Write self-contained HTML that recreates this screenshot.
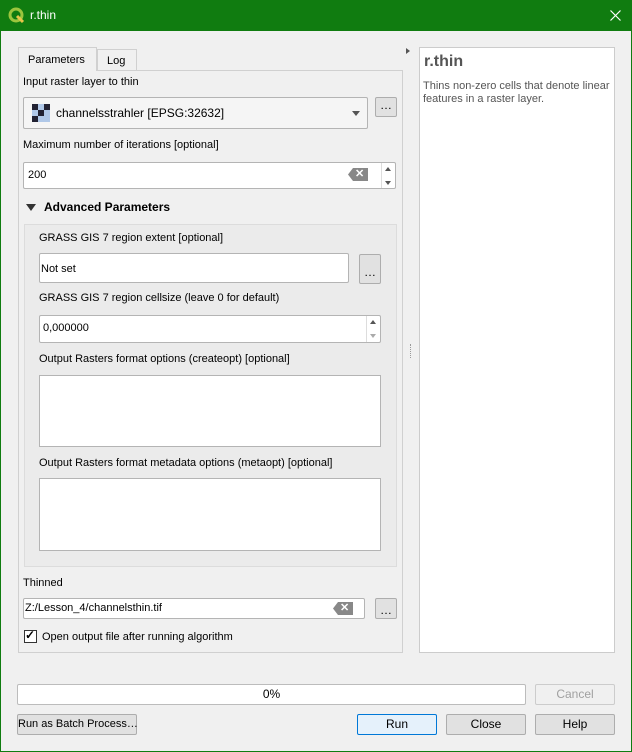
<!DOCTYPE html>
<html><head><style>
*{box-sizing:border-box;margin:0;padding:0}
body{width:632px;height:752px;background:#f0f0f0;font-family:"Liberation Sans",sans-serif;font-size:11px;color:#000;position:relative;overflow:hidden}
.a{position:absolute}
.t{position:absolute;white-space:nowrap;line-height:13px}
.f{position:absolute;background:#fff;border:1px solid #b4b4b4;border-radius:2px}
.b{position:absolute;background:#e1e1e1;border:1px solid #adadad;border-radius:2px;text-align:center;font-size:12px;white-space:nowrap}
.clr{position:absolute;width:20px;height:13px;background:#888;clip-path:polygon(25% 0,100% 0,100% 100%,25% 100%,0 50%)}
.clr:after{content:"✕";position:absolute;left:7px;top:-1px;color:#fff;font-size:11px;font-weight:bold}
</style></head><body>
<div class="a" style="left:0;top:0;width:632px;height:752px;border:1px solid #107c10;border-top:none"></div>
<div class="a" style="left:0;top:0;width:632px;height:31px;background:#107c10"></div>
<svg class="a" style="left:8px;top:7px" width="17" height="17" viewBox="0 0 17 17"><circle cx="8" cy="8" r="6" fill="none" stroke="#9bc53d" stroke-width="3"/><path d="M9 9l6 6" stroke="#e8c54a" stroke-width="3"/></svg>
<div class="t" style="left:30px;top:9px;color:#fff;font-size:12px">r.thin</div>
<svg class="a" style="left:610px;top:10px" width="11" height="11" viewBox="0 0 11 11"><path d="M0.5 0.5L10.5 10.5M10.5 0.5L0.5 10.5" stroke="#fff" stroke-width="1.2"/></svg>

<div class="a" style="left:18px;top:70px;width:385px;height:583px;border:1px solid #d0d0d0;background:#f0f0f0"></div>
<div class="a" style="left:18px;top:47px;width:79px;height:24px;border:1px solid #d0d0d0;border-bottom:none;background:#f0f0f0"></div>
<div class="t" style="left:28px;top:54px">Parameters</div>
<div class="a" style="left:97px;top:49px;width:40px;height:21px;border:1px solid #d0d0d0;border-bottom:none;background:#f0f0f0"></div>
<div class="t" style="left:107px;top:55px">Log</div>

<div class="t" style="left:23px;top:76px">Input raster layer to thin</div>
<div class="f" style="left:23px;top:97px;width:345px;height:32px;background:#f5f5f5"></div>
<div class="a" style="left:32px;top:104px;width:18px;height:18px;background:#b0c8e8"></div>
<div class="a" style="left:32px;top:104px;width:6px;height:6px;background:#223"></div>
<div class="a" style="left:44px;top:104px;width:6px;height:6px;background:#223"></div>
<div class="a" style="left:38px;top:110px;width:6px;height:6px;background:#223"></div>
<div class="a" style="left:32px;top:116px;width:6px;height:6px;background:#223"></div>
<div class="t" style="left:56px;top:107px;font-size:12px">channelsstrahler [EPSG:32632]</div>
<div class="a" style="left:352px;top:111px;border:4px solid transparent;border-top:5px solid #555"></div>
<div class="b" style="left:375px;top:97px;width:22px;height:20px;line-height:14px">…</div>

<div class="t" style="left:23px;top:139px">Maximum number of iterations [optional]</div>
<div class="f" style="left:23px;top:162px;width:373px;height:27px"></div>
<div class="t" style="left:28px;top:169px">200</div>
<div class="clr" style="left:348px;top:168px"></div>
<div class="a" style="left:381px;top:163px;width:1px;height:25px;background:#ddd"></div>
<div class="a" style="left:385px;top:167px;border:3px solid transparent;border-bottom:4px solid #555;border-top:none"></div>
<div class="a" style="left:385px;top:181px;border:3px solid transparent;border-top:4px solid #555;border-bottom:none"></div>

<div class="a" style="left:26px;top:204px;border:5px solid transparent;border-top:7px solid #333;border-bottom:none"></div>
<div class="t" style="left:44px;top:201px;font-weight:bold;font-size:12px">Advanced Parameters</div>

<div class="a" style="left:24px;top:224px;width:373px;height:343px;border:1px solid #dcdcdc;background:#ebebeb"></div>
<div class="t" style="left:39px;top:232px">GRASS GIS 7 region extent [optional]</div>
<div class="f" style="left:39px;top:253px;width:310px;height:30px"></div>
<div class="t" style="left:41px;top:263px">Not set</div>
<div class="b" style="left:359px;top:254px;width:22px;height:30px;line-height:34px">…</div>
<div class="t" style="left:39px;top:292px">GRASS GIS 7 region cellsize (leave 0 for default)</div>
<div class="f" style="left:39px;top:315px;width:342px;height:28px"></div>
<div class="t" style="left:43px;top:322px">0,000000</div>
<div class="a" style="left:366px;top:316px;width:1px;height:26px;background:#ddd"></div>
<div class="a" style="left:370px;top:320px;border:3px solid transparent;border-bottom:4px solid #555;border-top:none"></div>
<div class="a" style="left:370px;top:334px;border:3px solid transparent;border-top:4px solid #aaa;border-bottom:none"></div>
<div class="t" style="left:39px;top:353px">Output Rasters format options (createopt) [optional]</div>
<div class="f" style="left:39px;top:375px;width:342px;height:72px;border-radius:0"></div>
<div class="t" style="left:39px;top:457px">Output Rasters format metadata options (metaopt) [optional]</div>
<div class="f" style="left:39px;top:478px;width:342px;height:73px;border-radius:0"></div>

<div class="t" style="left:23px;top:577px">Thinned</div>
<div class="f" style="left:23px;top:598px;width:342px;height:21px"></div>
<div class="t" style="left:25px;top:602px">Z:/Lesson_4/channelsthin.tif</div>
<div class="clr" style="left:333px;top:602px"></div>
<div class="b" style="left:375px;top:598px;width:22px;height:21px;line-height:22px">…</div>
<div class="a" style="left:24px;top:630px;width:13px;height:13px;background:#fff;border:1px solid #333"></div>
<div class="t" style="left:25px;top:629px;font-size:12px;font-weight:bold">✓</div>
<div class="t" style="left:42px;top:631px">Open output file after running algorithm</div>

<div class="a" style="left:406px;top:48px;border:3px solid transparent;border-left:4px solid #555;border-right:none"></div>
<div class="a" style="left:410px;top:344px;width:1px;height:14px;border-left:1px dotted #999"></div>
<div class="a" style="left:419px;top:47px;width:196px;height:606px;background:#fff;border:1px solid #ccc"></div>
<div class="t" style="left:424px;top:53px;font-size:16px;font-weight:bold;color:#555;line-height:18px">r.thin</div>
<div class="t" style="left:423px;top:80px;color:#555;line-height:13px">Thins non-zero cells that denote linear<br>features in a raster layer.</div>

<div class="a" style="left:17px;top:684px;width:509px;height:21px;background:#fff;border:1px solid #bcbcbc;border-radius:2px;text-align:center;line-height:19px;font-size:12px">0%</div>
<div class="b" style="left:535px;top:684px;width:80px;height:21px;line-height:19px;color:#a0a0a0;border-color:#ccc;background:#f0f0f0">Cancel</div>
<div class="b" style="left:17px;top:714px;width:120px;height:21px;line-height:19px;font-size:11px">Run as Batch Process…</div>
<div class="b" style="left:357px;top:714px;width:80px;height:21px;line-height:19px;border-color:#0078d7;background:#e5f1fb">Run</div>
<div class="b" style="left:446px;top:714px;width:80px;height:21px;line-height:19px">Close</div>
<div class="b" style="left:535px;top:714px;width:80px;height:21px;line-height:19px">Help</div>
</body></html>
